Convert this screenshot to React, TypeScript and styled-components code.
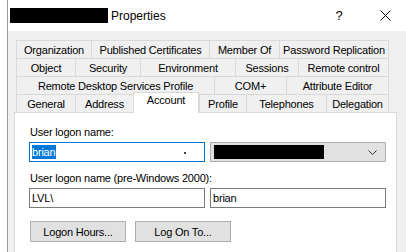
import styled, { createGlobalStyle } from "styled-components";

const GlobalStyle = createGlobalStyle`
    html, body {
        margin: 0;
        padding: 0;
        background: #ffffff;
        font-family: "Liberation Sans", Arial, sans-serif;
        font-size: 11px;
        color: #000000;
    }
`;

const Page = styled.div`
    width: 406px;
    height: 252px;
    overflow: hidden;
    padding-left: 7px;
    box-sizing: border-box;
    display: flex;
`;

const Window = styled.div`
    flex: 0 0 400px;
    border-left: 1px solid #9a9a9a;
    background: #f0f0f0;
    display: flex;
    flex-direction: column;
`;

const TitleBar = styled.div`
    height: 31px;
    flex: 0 0 31px;
    background: #ffffff;
    display: flex;
    align-items: center;
    padding-left: 2px;
`;

const Redacted = styled.div<{ $w: number; $h: number }>`
    width: ${p => p.$w}px;
    height: ${p => p.$h}px;
    background: #000000;
    flex: 0 0 auto;
`;

const TitleText = styled.span`
    font-size: 12px;
    margin-left: 3px;
`;

const TitleButtons = styled.div`
    margin-left: auto;
    display: flex;
    height: 100%;
`;

const TitleButton = styled.div`
    width: 46px;
    height: 100%;
    display: flex;
    align-items: center;
    justify-content: center;
    font-size: 13px;
`;

const Body = styled.div`
    padding: 9px 0 0 6px;
    display: flex;
    flex-direction: column;
`;

const TabRows = styled.div`
    margin-left: 2px;
    width: 373px;
    display: flex;
    flex-direction: column;
`;

const TabRow = styled.div`
    display: flex;
    height: 18px;
`;

const Tab = styled.div<{ $w: number; $active?: boolean }>`
    box-sizing: border-box;
    width: ${p => p.$w}px;
    flex: 0 0 auto;
    height: ${p => (p.$active ? 21 : 18)}px;
    margin-top: ${p => (p.$active ? -2 : 0)}px;
    border-top: 1px solid #d9d9d9;
    border-left: 1px solid #d9d9d9;
    border-right: ${p => (p.$active ? "1px solid #d9d9d9" : "none")};
    background: ${p => (p.$active ? "#ffffff" : "#f0f0f0")};
    position: ${p => (p.$active ? "relative" : "static")};
    z-index: ${p => (p.$active ? 1 : 0)};
    display: flex;
    justify-content: center;
    align-items: ${p => (p.$active ? "flex-start" : "center")};
    padding-top: ${p => (p.$active ? 1 : 0)}px;
    white-space: nowrap;
    letter-spacing: -0.2px;
    &:last-child {
        border-right: 1px solid #d9d9d9;
    }
`;

const Panel = styled.div`
    width: 383px;
    height: 160px;
    box-sizing: border-box;
    background: #ffffff;
    border: 1px solid #d9d9d9;
    padding: 12px 0 0 14px;
    display: flex;
    flex-direction: column;
`;

const Label = styled.div<{ $top: number }>`
    height: 14px;
    line-height: 14px;
    margin: ${p => p.$top}px 0 3px 1px;
    letter-spacing: -0.2px;
    white-space: nowrap;
`;

const FieldRow = styled.div`
    display: flex;
    gap: 5px;
`;

const TextBox = styled.div<{ $focus?: boolean }>`
    box-sizing: border-box;
    width: 176px;
    height: 20px;
    border: 1px solid ${p => (p.$focus ? "#0078d7" : "#7a7a7a")};
    background: #ffffff;
    display: flex;
    align-items: center;
    padding-left: 2px;
    letter-spacing: -0.2px;
`;

const Selected = styled.span`
    background: #0078d7;
    color: #ffffff;
    height: 14px;
    line-height: 14px;
    padding-right: 1px;
`;

const Dot = styled.span`
    width: 2px;
    height: 2px;
    border-radius: 1px;
    background: #000000;
    margin: 2px 18px 0 auto;
`;

const Combo = styled.div`
    box-sizing: border-box;
    width: 176px;
    height: 20px;
    border: 1px solid #adadad;
    background: #e1e1e1;
    display: flex;
    align-items: center;
    padding: 0 8px 0 3px;
`;

const ComboArrow = styled.svg`
    margin-left: auto;
`;

const ButtonRow = styled.div`
    display: flex;
    gap: 9px;
    margin: 13px 0 0 1px;
`;

const Button = styled.div`
    box-sizing: border-box;
    width: 96px;
    height: 21px;
    border: 1px solid #adadad;
    background: #e1e1e1;
    display: flex;
    align-items: center;
    justify-content: center;
    letter-spacing: -0.2px;
`;

interface ITab {
    name: string;
    w: number;
    active?: boolean;
}

const rows: ITab[][] = [
    [
        { name: "Organization", w: 75 },
        { name: "Published Certificates", w: 118 },
        { name: "Member Of", w: 70 },
        { name: "Password Replication", w: 110 },
    ],
    [
        { name: "Object", w: 59 },
        { name: "Security", w: 65 },
        { name: "Environment", w: 95 },
        { name: "Sessions", w: 63 },
        { name: "Remote control", w: 91 },
    ],
    [
        { name: "Remote Desktop Services Profile", w: 198 },
        { name: "COM+", w: 72 },
        { name: "Attribute Editor", w: 103 },
    ],
    [
        { name: "General", w: 59 },
        { name: "Address", w: 58 },
        { name: "Account", w: 66, active: true },
        { name: "Profile", w: 47 },
        { name: "Telephones", w: 80 },
        { name: "Delegation", w: 63 },
    ],
];

function App() {
    return <>
        <GlobalStyle />
        <Page>
            <Window>
                <TitleBar>
                    <Redacted $w={98} $h={15} />
                    <TitleText>Properties</TitleText>
                    <TitleButtons>
                        <TitleButton>?</TitleButton>
                        <TitleButton>
                            <svg width="11" height="11" viewBox="0 0 11 11">
                                <path d="M0.5 0.5 L10.5 10.5 M10.5 0.5 L0.5 10.5" stroke="#000" strokeWidth="1" />
                            </svg>
                        </TitleButton>
                    </TitleButtons>
                </TitleBar>
                <Body>
                    <TabRows>
                        {rows.map((row, i) =>
                            <TabRow key={i}>
                                {row.map(tab =>
                                    <Tab key={tab.name} $w={tab.w} $active={tab.active}>{tab.name}</Tab>
                                )}
                            </TabRow>
                        )}
                    </TabRows>
                    <Panel>
                        <Label $top={0}>User logon name:</Label>
                        <FieldRow>
                            <TextBox $focus>
                                <Selected>brian</Selected>
                                <Dot />
                            </TextBox>
                            <Combo>
                                <Redacted $w={110} $h={14} />
                                <ComboArrow width="9" height="5" viewBox="0 0 9 5">
                                    <path d="M0.5 0.5 L4.5 4.5 L8.5 0.5" fill="none" stroke="#333" strokeWidth="1" />
                                </ComboArrow>
                            </Combo>
                        </FieldRow>
                        <Label $top={9}>User logon name (pre-Windows 2000):</Label>
                        <FieldRow>
                            <TextBox>LVL\</TextBox>
                            <TextBox>brian</TextBox>
                        </FieldRow>
                        <ButtonRow>
                            <Button>Logon Hours...</Button>
                            <Button>Log On To...</Button>
                        </ButtonRow>
                    </Panel>
                </Body>
            </Window>
        </Page>
    </>;
}

export default App;
